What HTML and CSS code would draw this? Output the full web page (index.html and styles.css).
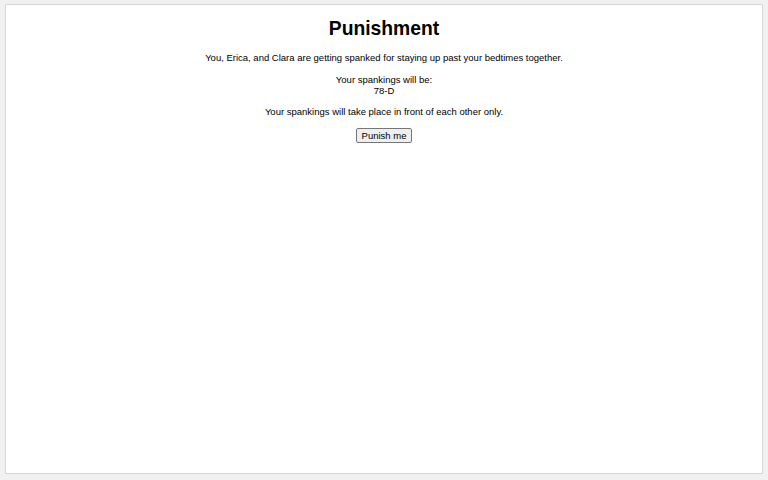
FILE: index.html
```html
<!doctype html>
<html lang="en">
<head>
  <meta charset="utf-8">
  <title>Punishment</title>
  <link rel="stylesheet" href="styles.css">
</head>
<body>
  <main class="page">
    <h1 class="title">Punishment</h1>
    <p>You, Erica, and Clara are getting spanked for staying up past your bedtimes together.</p>
    <p>Your spankings will be:<br>78-D</p>
    <p>Your spankings will take place in front of each other only.</p>
    <button class="go" type="button">Punish me</button>
  </main>
</body>
</html>
```

FILE: styles.css
```css
*,*::before,*::after{box-sizing:border-box}

body{
  margin:0;
  padding:4px 5px 6px;
  height:100vh;
  background:#f1f1f1;
  font-family:"Liberation Sans",Arial,sans-serif;
  font-size:9.5px;
  color:#000;
}

.page{
  height:100%;
  background:#fff;
  border:1px solid #d6d6d6;
  text-align:center;
  padding:12px 20px;
}

.title{
  margin:0 0 11px;
  font-size:19.3px;
  font-weight:bold;
  line-height:24px;
}

.page p{
  margin:0 0 10.5px;
  line-height:11px;
}

.go{
  font:inherit;
  font-size:9.5px;
  padding:1px 5px;
  background:#efefef;
  border:1px solid #767676;
  border-radius:2px;
}
```
